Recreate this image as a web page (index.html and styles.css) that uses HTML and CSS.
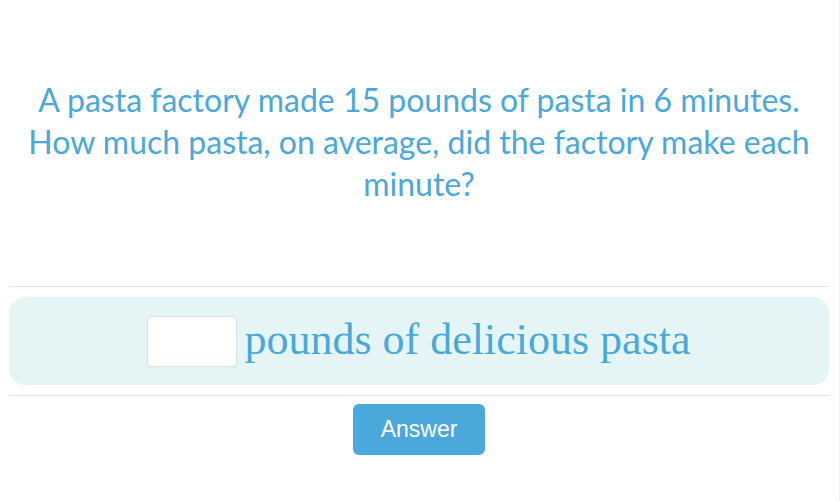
FILE: index.html
```html
<!DOCTYPE html>
<html lang="en">
<head>
  <meta charset="UTF-8" />
  <title>Pasta Factory</title>
  <link rel="stylesheet" href="styles.css">
</head>
<body>
  <div class="problem">
    <p class="question">A pasta factory made 15 pounds of pasta in 6 minutes. How much pasta, on average, did the factory make each minute?</p>

    <hr class="rule">

    <div class="answer-box">
      <input type="text" class="answer-input">
      <span class="unit">pounds of delicious pasta</span>
    </div>

    <hr class="rule">

    <div class="actions">
      <button class="answer-btn">Answer</button>
    </div>
  </div>
</body>
</html>
```

FILE: styles.css
```css
:root {
  --blue: #4aa8da;
  --teal-bg: #e5f5f5;
  --line: #e3e3e8;
}

* {
  box-sizing: border-box;
  margin: 0;
  padding: 0;
}

body {
  background: #fff;
  font-family: Lato, sans-serif;
  border-right: 1px dotted #e8e8e8;
  min-height: 100vh;
}

.problem {
  width: 820px;
  margin-left: 9px;
}

.question {
  color: var(--blue);
  font-size: 32px;
  line-height: 42px;
  text-align: center;
  padding: 79px 8px 0;
  height: 286px;
}

.rule {
  border: none;
  border-top: 1px solid var(--line);
}

.answer-box {
  margin: 10px 0;
  height: 88px;
  background: var(--teal-bg);
  border-radius: 16px;
  display: flex;
  align-items: center;
  justify-content: center;
  gap: 7px;
}

.answer-input {
  width: 90px;
  height: 51px;
  background: #fff;
  border: 1px solid #dfe1e6;
  border-radius: 4px;
  outline: none;
}

.unit {
  font-family: "Liberation Serif", serif;
  font-size: 44px;
  color: var(--blue);
  position: relative;
  top: -2px;
}

.actions {
  display: flex;
  justify-content: center;
  padding-top: 8px;
}

.answer-btn {
  width: 132px;
  height: 51px;
  background: var(--blue);
  color: #fff;
  border: none;
  border-radius: 6px;
  font-family: "Liberation Sans", Arial, sans-serif;
  font-size: 23px;
}
```
